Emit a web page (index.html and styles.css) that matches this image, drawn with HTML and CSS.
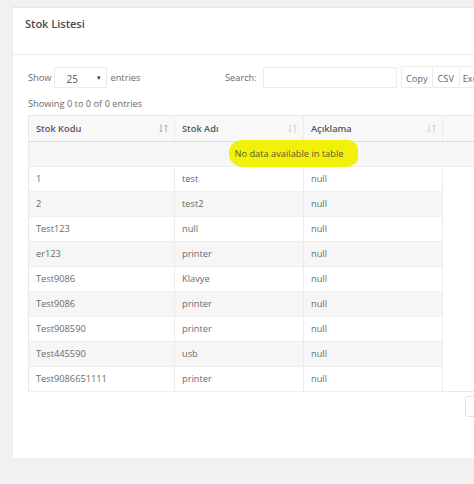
FILE: index.html
```html
<!DOCTYPE html>
<html lang="tr">
<head>
<meta charset="utf-8">
<title>Stok Listesi</title>
<link rel="stylesheet" href="styles.css">
</head>
<body>
<div class="page">
  <div class="card">
    <div class="card-header">
      <h3 class="card-title">Stok Listesi</h3>
    </div>
    <div class="card-body">
      <div class="controls">
        <div class="length">
          <span>Show</span>
          <span class="select"><span class="select-val">25</span><span class="caret">▾</span></span>
          <span>entries</span>
        </div>
        <div class="filter">
          <span>Search:</span>
          <span class="input"></span>
        </div>
        <div class="buttons">
          <span class="btn btn-copy">Copy</span><span class="btn btn-csv">CSV</span><span class="btn btn-excel">Excel</span>
        </div>
      </div>
      <div class="info">Showing 0 to 0 of 0 entries</div>
      <table class="dt">
        <colgroup>
          <col class="c1"><col class="c2"><col class="c3"><col class="c4">
        </colgroup>
        <thead>
          <tr>
            <th class="sort active">Stok Kodu<span class="sort-icon"><svg width="9" height="9" viewBox="0 0 9 9"><path d="M2 0.5V8M0.6 6.4L2 8L3.4 6.4" fill="none" stroke="currentColor" stroke-width="1"/><path d="M7 8.5V1M5.6 2.6L7 1L8.4 2.6" fill="none" stroke="currentColor" stroke-width="1"/></svg></span></th>
            <th class="sort">Stok Adı<span class="sort-icon"><svg width="9" height="9" viewBox="0 0 9 9"><path d="M2 0.5V8M0.6 6.4L2 8L3.4 6.4" fill="none" stroke="currentColor" stroke-width="1"/><path d="M7 8.5V1M5.6 2.6L7 1L8.4 2.6" fill="none" stroke="currentColor" stroke-width="1"/></svg></span></th>
            <th class="sort">Açıklama<span class="sort-icon"><svg width="9" height="9" viewBox="0 0 9 9"><path d="M2 0.5V8M0.6 6.4L2 8L3.4 6.4" fill="none" stroke="currentColor" stroke-width="1"/><path d="M7 8.5V1M5.6 2.6L7 1L8.4 2.6" fill="none" stroke="currentColor" stroke-width="1"/></svg></span></th>
            <th></th>
          </tr>
        </thead>
        <tbody>
          <tr class="odd"><td colspan="4" class="empty"><span class="hl">No data available in table</span></td></tr>
          <tr class="even"><td>1</td><td>test</td><td>null</td></tr>
          <tr class="odd"><td>2</td><td>test2</td><td>null</td></tr>
          <tr class="even"><td>Test123</td><td>null</td><td>null</td></tr>
          <tr class="odd"><td>er123</td><td>printer</td><td>null</td></tr>
          <tr class="even"><td>Test9086</td><td>Klavye</td><td>null</td></tr>
          <tr class="odd"><td>Test9086</td><td>printer</td><td>null</td></tr>
          <tr class="even"><td>Test908590</td><td>printer</td><td>null</td></tr>
          <tr class="odd"><td>Test445590</td><td>usb</td><td>null</td></tr>
          <tr class="even"><td>Test9086651111</td><td>printer</td><td>null</td></tr>
        </tbody>
      </table>
      <div class="paging">
        <span class="page-btn">Previous</span>
      </div>
    </div>
  </div>
</div>
</body>
</html>
```
FILE: styles.css
```css
html, body {
  margin: 0;
  padding: 0;
  background: #f1f1f3;
  overflow: hidden;
  font-family: "Open Sans", "Liberation Sans", sans-serif;
  color: #6a6a6a;
  font-size: 9.25px;
}
.page {
  width: 474px;
  height: 484px;
  padding: 8px 0 0 13px;
  box-sizing: border-box;
  overflow: hidden;
}
.card {
  width: 600px;
  height: 450px;
  background: #fff;
  box-shadow: 0 -1px 2px rgba(0,0,0,0.06);
}
.card-header {
  height: 47px;
  box-sizing: border-box;
  padding: 9px 12px 0;
  border-bottom: 1px solid #ececec;
}
.card-title {
  margin: 0;
  font-size: 11px;
  font-weight: 600;
  color: #4a4a4a;
  line-height: 14px;
}
.card-body {
  padding: 11px 15px 0;
}
.controls {
  display: flex;
  align-items: center;
  height: 22px;
}
.length {
  display: flex;
  align-items: center;
  width: 197px;
}
.select {
  display: inline-flex;
  align-items: center;
  justify-content: space-between;
  width: 53px;
  height: 21px;
  box-sizing: border-box;
  border: 1px solid #ebebeb;
  margin: 0 3px 0 3px;
  padding: 3px 5px 0 11px;
  color: #555;
  font-size: 10px;
}
.caret {
  font-size: 7px;
  color: #333;
  margin-top: -3px;
}
.filter {
  display: flex;
  align-items: center;
}
.input {
  display: inline-block;
  width: 134px;
  height: 21px;
  box-sizing: border-box;
  border: 1px solid #ebebeb;
  margin-left: 6px;
}
.buttons {
  display: flex;
  margin-left: 4px;
}
.btn {
  display: inline-flex;
  align-items: center;
  justify-content: center;
  height: 22px;
  box-sizing: border-box;
  border: 1px solid #ececec;
  padding: 2px 0 0;
  color: #666;
}
.btn-copy { width: 32px; }
.btn-csv { width: 27px; border-left: none; }
.btn-excel { width: 40px; border-left: none; justify-content: flex-start; padding-left: 3px; }
.info {
  margin-top: 5px;
  height: 22px;
  line-height: 22px;
}
.dt {
  border-collapse: collapse;
  table-layout: fixed;
  width: 521px;
  border: 1px solid #e8e8e8;
}
.c1 { width: 146px; }
.c2 { width: 129px; }
.c3 { width: 139px; }
.c4 { width: 107px; }
.dt th {
  position: relative;
  height: 25px;
  padding: 0 7px;
  text-align: left;
  font-weight: 600;
  color: #555;
  background: #f8f8f8;
  border-right: 1px solid #ececec;
  border-bottom: 1px solid #dcdcdc;
}
.sort-icon {
  position: absolute;
  right: 6px;
  top: 8px;
  color: #d2d2d2;
  line-height: 0;
}
.active .sort-icon { color: #ababab; }
.dt td {
  height: 24px;
  padding: 0 7px;
  color: #6b6b6b;
  border-right: 1px solid #ececec;
  border-bottom: 1px solid #efefef;
  line-height: 14px;
}
.dt tr.odd td { background: #f6f6f6; }
.dt td.empty {
  position: relative;
  z-index: 0;
  text-align: center;
  color: #5c5a30;
  padding: 0;
}
.hl {
  position: relative;
  display: inline-block;
}
.hl::before {
  content: "";
  position: absolute;
  left: -6px;
  right: -15px;
  top: -7px;
  bottom: -6px;
  background: #f3f00a;
  border-radius: 14px 10px 12px 16px / 12px 9px 10px 12px;
  z-index: -1;
}
.paging {
  display: flex;
  padding: 4px 0 0 437px;
}
.page-btn {
  display: inline-block;
  height: 21px;
  width: 60px;
  box-sizing: border-box;
  border: 1px solid #e2e2e2;
  border-radius: 3px;
  padding: 3px 0 0 14px;
  color: #666;
}
```
